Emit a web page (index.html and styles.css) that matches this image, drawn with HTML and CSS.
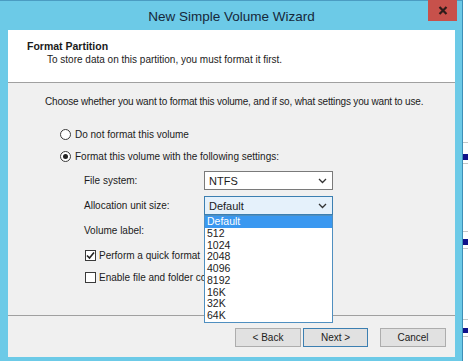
FILE: index.html
```html
<!DOCTYPE html>
<html lang="en">
<head>
  <meta charset="UTF-8" />
  <title>New Simple Volume Wizard</title>
  <link rel="stylesheet" href="styles.css">
</head>
<body>
  <div class="window">
    <div class="titlebar">
      <span class="title">New Simple Volume Wizard</span>
      <button class="close" aria-label="Close">
        <svg width="10" height="9" viewBox="0 0 10 9"><path d="M1.5 1 L8.5 8 M8.5 1 L1.5 8" stroke="#2e1c1a" stroke-width="2.2" fill="none"/></svg>
      </button>
    </div>

    <div class="client">
      <div class="header">
        <div class="header-title">Format Partition</div>
        <div class="header-sub">To store data on this partition, you must format it first.</div>
      </div>

      <div class="main">
        <p class="intro">Choose whether you want to format this volume, and if so, what settings you want to use.</p>

        <div class="option first">
          <span class="radio"></span>
          <span>Do not format this volume</span>
        </div>
        <div class="option">
          <span class="radio checked"></span>
          <span>Format this volume with the following settings:</span>
        </div>

        <div class="settings">
          <div class="field">
            <span class="label">File system:</span>
            <div class="combo">
              <span>NTFS</span>
              <svg class="chev" width="9" height="6" viewBox="0 0 9 6"><path d="M1 1 L4.5 4.5 L8 1" stroke="#333" stroke-width="1.3" fill="none"/></svg>
            </div>
          </div>
          <div class="field">
            <span class="label">Allocation unit size:</span>
            <div class="combo open">
              <span>Default</span>
              <svg class="chev" width="9" height="6" viewBox="0 0 9 6"><path d="M1 1 L4.5 4.5 L8 1" stroke="#333" stroke-width="1.3" fill="none"/></svg>
              <ul class="dropdown">
                <li class="selected">Default</li>
                <li>512</li>
                <li>1024</li>
                <li>2048</li>
                <li>4096</li>
                <li>8192</li>
                <li>16K</li>
                <li>32K</li>
                <li>64K</li>
              </ul>
            </div>
          </div>
          <div class="field">
            <span class="label">Volume label:</span>
            <div class="textbox"></div>
          </div>

          <div class="check first">
            <span class="box checked">
              <svg width="9" height="9" viewBox="0 0 9 9"><path d="M1 4.5 L3.5 7 L8 1.5" stroke="#222" stroke-width="1.6" fill="none"/></svg>
            </span>
            <span>Perform a quick format</span>
          </div>
          <div class="check">
            <span class="box"></span>
            <span>Enable file and folder compression</span>
          </div>
        </div>
      </div>

      <div class="footer">
        <button class="btn">&lt; Back</button>
        <button class="btn default">Next &gt;</button>
        <button class="btn cancel">Cancel</button>
      </div>
    </div>
  </div>
  <div class="desktop"></div>
</body>
</html>
```

FILE: styles.css
```css
* { box-sizing: border-box; }
body {
  margin: 0;
  width: 468px;
  height: 361px;
  overflow: hidden;
  display: flex;
  font-family: 'Liberation Sans', Arial, sans-serif;
  font-size: 10px;
  color: #1b1b1b;
}
.window {
  width: 463px;
  height: 361px;
  background: #6ccae7;
  border-top: 1px solid #4b9cc2;
  border-right: 1px solid #3d8fb7;
  padding: 0 7px 4px 8px;
  display: flex;
  flex-direction: column;
}
.desktop {
  flex: 1;
  background: linear-gradient(to bottom,
    #fff 0, #fff 142px, #c8c8c8 142px, #c8c8c8 143px, #fff 143px, #fff 154px,
    #10128a 154px, #10128a 160px, #fff 160px, #fff 163px, #c8c8c8 163px, #c8c8c8 164px,
    #fff 164px, #fff 231px, #c8c8c8 231px, #c8c8c8 232px, #fff 232px, #fff 239px,
    #10128a 239px, #10128a 245px, #fff 245px, #fff 248px, #c8c8c8 248px, #c8c8c8 249px,
    #fff 249px, #fff 319px, #c8c8c8 319px, #c8c8c8 320px, #fff 320px, #fff 328px,
    #10128a 328px, #10128a 333px, #fff 333px, #fff 336px, #c8c8c8 336px, #c8c8c8 337px,
    #fff 337px);
}

.titlebar {
  height: 29px;
  position: relative;
  display: flex;
  align-items: center;
  justify-content: center;
}
.title {
  font-size: 13.5px;
  color: #16283a;
  padding-top: 2px;
}
.close {
  position: absolute;
  top: -1px;
  right: -2px;
  width: 29px;
  height: 21px;
  border: none;
  padding: 0;
  background: #c7514b;
  display: flex;
  align-items: center;
  justify-content: center;
}

.client {
  flex: 1;
  background: #f0f0f0;
  display: flex;
  flex-direction: column;
}
.header {
  height: 53px;
  background: #fff;
  border-bottom: 1px solid #a0a0a0;
  padding: 10px 0 0 19px;
}
.header-title {
  font-weight: bold;
  font-size: 10.5px;
  line-height: 12px;
}
.header-sub {
  padding-left: 20px;
  line-height: 12px;
  margin-top: 2px;
}

.main {
  flex: 1;
  padding: 13px 0 0 37px;
  position: relative;
}
.intro {
  margin: 0;
  line-height: 12px;
  letter-spacing: -0.18px;
}
.option {
  display: flex;
  align-items: center;
  gap: 4px;
  height: 12px;
  margin: 10px 0 0 15px;
}
.option.first { margin-top: 20px; }
.radio {
  width: 11px;
  height: 11px;
  border: 1px solid #3a3a3a;
  border-radius: 50%;
  background: #fff;
  display: flex;
  align-items: center;
  justify-content: center;
}
.radio.checked::after {
  content: "";
  width: 5px;
  height: 5px;
  border-radius: 50%;
  background: #222;
}

.settings {
  padding-left: 39px;
  margin-top: 9px;
}
.field {
  display: flex;
  align-items: center;
  height: 19px;
  margin-bottom: 6px;
}
.label {
  width: 120px;
}
.combo, .textbox {
  width: 129px;
  height: 19px;
  background: #fff;
  border: 1px solid #7a7a7a;
  position: relative;
}
.combo {
  display: flex;
  align-items: center;
  padding-left: 4px;
  font-size: 11px;
}
.combo.open {
  background: #e5f1fb;
  border-color: #3c7fb1;
}
.chev {
  position: absolute;
  right: 5px;
  top: 6px;
}
.dropdown {
  position: absolute;
  left: -1px;
  top: 18px;
  width: 129px;
  margin: 0;
  padding: 0;
  list-style: none;
  background: #fff;
  border: 1px solid #4f8fc0;
  z-index: 2;
}
.dropdown li {
  line-height: 11.75px;
  padding-left: 2px;
  font-size: 10.5px;
  color: #222;
}
.dropdown li.selected {
  background: #3a98f0;
  color: #fff;
}

.check {
  display: flex;
  align-items: center;
  gap: 3px;
  height: 12px;
  margin: 10px 0 0 1px;
  white-space: nowrap;
}
.check.first { margin-top: 9px; }
.box {
  width: 11px;
  height: 11px;
  border: 1px solid #3a3a3a;
  background: #fff;
  display: flex;
  align-items: center;
  justify-content: center;
}

.footer {
  height: 42px;
  border-top: 1px solid #a0a0a0;
  display: flex;
  justify-content: flex-end;
  align-items: flex-start;
  padding: 12px 9px 0 0;
  gap: 2px;
}
.btn {
  width: 66px;
  height: 19px;
  background: #e1e1e1;
  border: 1px solid #adadad;
  font-family: 'Liberation Sans', Arial, sans-serif;
  font-size: 10px;
  color: #1b1b1b;
  padding: 0;
}
.btn.default {
  border-color: #3c7fb1;
  width: 65px;
}
.btn.cancel {
  margin-left: 10px;
}
```
